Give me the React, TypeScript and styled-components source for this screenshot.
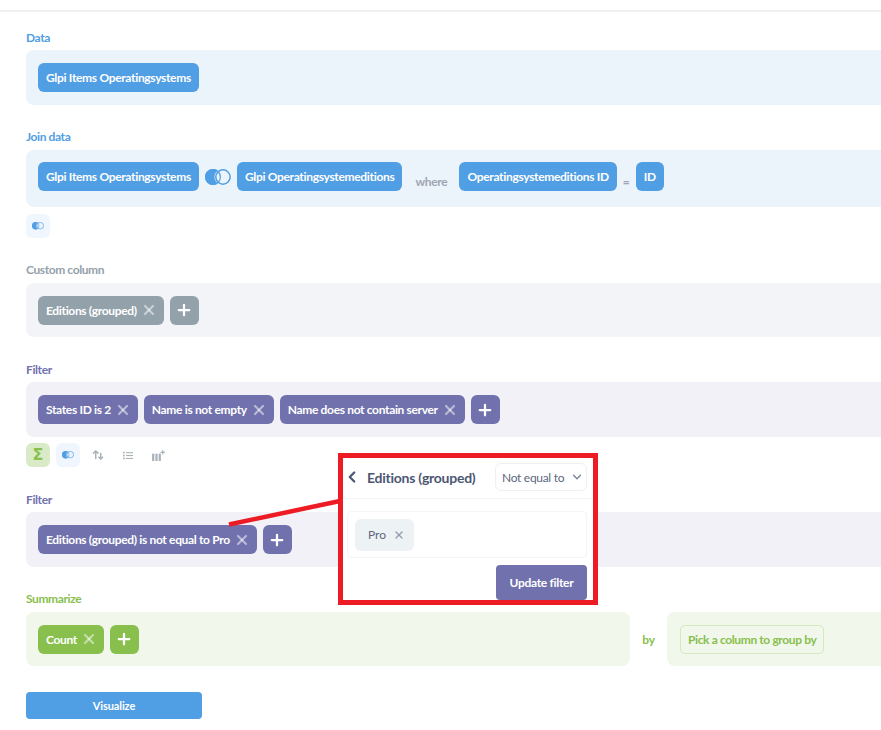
import React from 'react';
import styled, { createGlobalStyle, css } from 'styled-components';
import { ChevronDown, ChevronLeft, Plus, X } from 'lucide-react';

type Tone = 'blue' | 'gray' | 'purple' | 'green';

const tones: Record<Tone, { main: string; soft: string }> = {
  blue: { main: '#509ee3', soft: '#ebf3fb' },
  gray: { main: '#93a1ab', soft: '#f3f4f7' },
  purple: { main: '#7172ad', soft: '#f1f1f7' },
  green: { main: '#88bf4d', soft: '#f1f7ea' },
};

const GlobalStyle = createGlobalStyle`
  html, body {
    margin: 0;
    padding: 0;
    background: #fff;
    overflow: hidden;
    font-family: Lato, "Open Sans", sans-serif;
  }
`;

const Page = styled.div`
  position: relative;
  width: 881px;
  height: 730px;
  overflow: hidden;
  padding-top: 10px;
  box-sizing: border-box;
`;

const TopRule = styled.div`
  height: 2px;
  background: #f0f0f0;
`;

const Content = styled.div`
  width: 1000px;
  padding: 20px 0 0 26px;
  box-sizing: border-box;
`;

const Section = styled.section<{ $gap: number }>`
  margin-bottom: ${p => p.$gap}px;
`;

const Label = styled.div<{ $tone: Tone; $low?: boolean }>`
  height: 13px;
  line-height: ${p => (p.$low ? 12 : 10)}px;
  margin-bottom: 5px;
  font-size: 12px;
  font-weight: 700;
  letter-spacing: -0.4px;
  color: ${p => tones[p.$tone].main};
`;

const Panel = styled.div<{ $tone: Tone; $height: number }>`
  display: flex;
  align-items: center;
  gap: 6px;
  height: ${p => p.$height}px;
  padding: 0 12px;
  box-sizing: border-box;
  border-radius: 8px 0 0 8px;
  background: ${p => tones[p.$tone].soft};
`;

const JoinPanel = styled(Panel)`
  align-items: flex-start;
  padding-top: 12px;
`;

const Chip = styled.div<{ $tone: Tone }>`
  display: inline-flex;
  align-items: center;
  height: 29px;
  padding: 0 8px;
  box-sizing: border-box;
  border-radius: 6px;
  background: ${p => tones[p.$tone].main};
  color: #fff;
  font-size: 12px;
  font-weight: 700;
  letter-spacing: -0.32px;
  white-space: nowrap;
  flex: none;
`;

const ClosableChip = styled(Chip)`
  letter-spacing: -0.34px;
`;

const ChipClose = styled(X)`
  margin-left: 4px;
  margin-right: -1px;
  color: rgba(255, 255, 255, 0.5);
`;

const AddButton = styled.div<{ $tone: Tone }>`
  display: flex;
  align-items: center;
  justify-content: center;
  width: 29px;
  height: 29px;
  border-radius: 6px;
  background: ${p => tones[p.$tone].main};
  color: #fff;
  flex: none;
`;

const JoinVenn = styled.div`
  display: flex;
  align-items: center;
  height: 29px;
`;

const JoinWord = styled.span`
  margin: 12px 6px 0 7px;
  font-size: 12px;
  font-weight: 700;
  letter-spacing: -0.3px;
  color: #a0a5b4;
`;

const EqualSign = styled.span`
  margin-top: 12px;
  font-size: 12px;
  font-weight: 700;
  color: #a0a5b4;
`;

const ToolRow = styled.div<{ $top: number }>`
  display: flex;
  align-items: center;
  gap: 6px;
  height: 24px;
  margin-top: ${p => p.$top}px;
`;

const ToolButton = styled.div<{ $kind?: 'green' | 'blue' }>`
  display: flex;
  align-items: center;
  justify-content: center;
  width: 24px;
  height: 24px;
  border-radius: 6px;
  color: #a9b2b9;
  ${p =>
    p.$kind === 'green' &&
    css`
      background: #d9eac6;
      color: #88bf4d;
    `}
  ${p =>
    p.$kind === 'blue' &&
    css`
      background: #f0f6fd;
      color: #509ee3;
    `}
`;

const SigmaGlyph = styled.span`
  font-family: "DejaVu Sans", sans-serif;
  font-size: 16px;
  font-weight: 700;
  line-height: 1;
`;

const SummarizeRow = styled.div`
  display: flex;
  align-items: stretch;
`;

const SummarizeLeft = styled(Panel)`
  flex: none;
  width: 604px;
  border-radius: 8px;
`;

const ByWord = styled.span`
  display: flex;
  align-items: center;
  justify-content: center;
  width: 37px;
  font-size: 12px;
  font-weight: 700;
  letter-spacing: -0.3px;
  color: #88bf4d;
`;

const GroupPanel = styled(Panel)`
  flex: 1;
  padding-left: 13px;
`;

const GroupPicker = styled.div`
  display: flex;
  align-items: center;
  height: 29px;
  padding: 0 7px;
  box-sizing: border-box;
  border: 1px solid #d5e8bf;
  border-radius: 5px;
  font-size: 12px;
  font-weight: 700;
  letter-spacing: -0.38px;
  color: #88bf4d;
`;

const VisualizeButton = styled.div`
  display: flex;
  align-items: center;
  justify-content: center;
  width: 176px;
  height: 27px;
  border-radius: 4px;
  background: #509ee3;
  color: #fff;
  font-size: 11px;
  font-weight: 700;
  letter-spacing: -0.1px;
`;

const Callout = styled.div`
  position: absolute;
  left: 338px;
  top: 453px;
  width: 260px;
  height: 152px;
  box-sizing: border-box;
  border: 5px solid #ed1c24;
  background: #fff;
  display: flex;
  flex-direction: column;
`;

const CalloutHeader = styled.div`
  display: flex;
  align-items: center;
  justify-content: space-between;
  height: 41px;
  padding: 5px 6px 7px 0;
  box-sizing: border-box;
  border-bottom: 1px solid #f3f4f6;
`;

const CalloutTitle = styled.div`
  display: flex;
  align-items: center;
  gap: 6px;
  font-size: 14px;
  font-weight: 700;
  letter-spacing: -0.25px;
  color: #4c5773;
`;

const OperatorSelect = styled.div`
  display: flex;
  align-items: center;
  gap: 6px;
  width: 92px;
  height: 28px;
  padding-left: 6px;
  box-sizing: border-box;
  border: 1px solid #f0f0f3;
  border-radius: 6px;
  font-size: 12px;
  font-weight: 400;
  letter-spacing: -0.3px;
  white-space: nowrap;
  color: #5d6780;
`;

const SelectChevron = styled(ChevronDown)`
  color: #7a8398;
`;

const ValueBox = styled.div`
  display: flex;
  align-items: center;
  height: 47px;
  margin: 12px 6px 0 4px;
  padding-left: 7px;
  box-sizing: border-box;
  border: 1px solid #f3f4f6;
  border-radius: 4px;
`;

const ValueChip = styled.div`
  display: flex;
  align-items: center;
  gap: 7px;
  width: 59px;
  height: 32px;
  padding-left: 13px;
  box-sizing: border-box;
  border-radius: 6px;
  background: #edf2f5;
  font-size: 12px;
  font-weight: 400;
  color: #5d6780;
`;

const CalloutFooter = styled.div`
  display: flex;
  justify-content: flex-end;
  margin: 7px 6px 0 0;
`;

const UpdateButton = styled.div`
  display: flex;
  align-items: center;
  justify-content: center;
  width: 91px;
  height: 35px;
  border-radius: 4px;
  background: #7172ad;
  color: #fff;
  font-size: 12px;
  font-weight: 700;
  letter-spacing: -0.3px;
`;

const ConnectorLine = styled.svg`
  position: absolute;
  left: 225px;
  top: 495px;
`;

const VennIcon = ({ size = 26 }: { size?: number }) => (
  <svg width={size} height={(size * 16) / 26} viewBox="0 0 26 16" fill="none">
    <circle cx="8" cy="8" r="8" fill="#509ee3" />
    <circle cx="18" cy="8" r="8.6" fill="#fff" fillOpacity="0.8" />
    <circle cx="18" cy="8" r="7.2" fill="#ebf3fb" stroke="#509ee3" strokeWidth="1.5" />
    <circle cx="8" cy="8" r="7.4" stroke="#509ee3" strokeWidth="1.2" />
  </svg>
);

const SortIcon = () => (
  <svg width="12" height="10" viewBox="0 0 13 11" fill="none" stroke="currentColor" strokeWidth="1.6">
    <path d="M4 10V1.5M1 4l3-3 3 3" />
    <path d="M9.5 3v7M7 7.5l2.5 2.5L12 7.5" />
  </svg>
);

const ListIcon = () => (
  <svg width="10" height="9" viewBox="0 0 12 10" fill="currentColor">
    <rect x="0" y="0.5" width="2" height="2" />
    <rect x="0" y="4" width="2" height="2" />
    <rect x="0" y="7.5" width="2" height="2" />
    <rect x="3.5" y="1" width="8.5" height="1.3" />
    <rect x="3.5" y="4.4" width="8.5" height="1.3" />
    <rect x="3.5" y="7.9" width="8.5" height="1.3" />
  </svg>
);

const ColumnsAddIcon = () => (
  <svg width="13" height="11" viewBox="0 0 14 12" fill="currentColor">
    <rect x="0" y="4" width="2.4" height="8" />
    <rect x="3.6" y="4" width="2.4" height="8" />
    <rect x="7.2" y="4" width="2.4" height="8" />
    <path d="M11 0h1.2v2H14v1.2h-1.8V5H11V3.2H9.2V2H11z" />
  </svg>
);

function RemovableChip({ tone, text }: { tone: Tone; text: string }) {
  return (
    <ClosableChip $tone={tone}>
      {text}
      <ChipClose size={16} strokeWidth={3.2} />
    </ClosableChip>
  );
}

function Add({ tone }: { tone: Tone }) {
  return (
    <AddButton $tone={tone}>
      <Plus size={18} strokeWidth={3} />
    </AddButton>
  );
}

export default function App() {
  return (
    <>
      <GlobalStyle />
      <Page>
        <TopRule />
        <Content>
          <Section $gap={27}>
            <Label $tone="blue" $low>Data</Label>
            <Panel $tone="blue" $height={55}>
              <Chip $tone="blue">Glpi Items Operatingsystems</Chip>
            </Panel>
          </Section>

          <Section $gap={27}>
            <Label $tone="blue">Join data</Label>
            <JoinPanel $tone="blue" $height={57}>
              <Chip $tone="blue">Glpi Items Operatingsystems</Chip>
              <JoinVenn>
                <VennIcon />
              </JoinVenn>
              <Chip $tone="blue">Glpi Operatingsystemeditions</Chip>
              <JoinWord>where</JoinWord>
              <Chip $tone="blue">Operatingsystemeditions ID</Chip>
              <EqualSign>=</EqualSign>
              <Chip $tone="blue">ID</Chip>
            </JoinPanel>
            <ToolRow $top={7}>
              <ToolButton $kind="blue">
                <VennIcon size={12} />
              </ToolButton>
            </ToolRow>
          </Section>

          <Section $gap={27}>
            <Label $tone="gray">Custom column</Label>
            <Panel $tone="gray" $height={54}>
              <RemovableChip tone="gray" text="Editions (grouped)" />
              <Add tone="gray" />
            </Panel>
          </Section>

          <Section $gap={27}>
            <Label $tone="purple" $low>Filter</Label>
            <Panel $tone="purple" $height={55}>
              <RemovableChip tone="purple" text="States ID is 2" />
              <RemovableChip tone="purple" text="Name is not empty" />
              <RemovableChip tone="purple" text="Name does not contain server" />
              <Add tone="purple" />
            </Panel>
            <ToolRow $top={6}>
              <ToolButton $kind="green">
                <SigmaGlyph>Σ</SigmaGlyph>
              </ToolButton>
              <ToolButton $kind="blue">
                <VennIcon size={12} />
              </ToolButton>
              <ToolButton>
                <SortIcon />
              </ToolButton>
              <ToolButton>
                <ListIcon />
              </ToolButton>
              <ToolButton>
                <ColumnsAddIcon />
              </ToolButton>
            </ToolRow>
          </Section>

          <Section $gap={27}>
            <Label $tone="purple" $low>Filter</Label>
            <Panel $tone="purple" $height={55}>
              <RemovableChip tone="purple" text="Editions (grouped) is not equal to Pro" />
              <Add tone="purple" />
            </Panel>
          </Section>

          <Section $gap={26}>
            <Label $tone="green">Summarize</Label>
            <SummarizeRow>
              <SummarizeLeft $tone="green" $height={54}>
                <RemovableChip tone="green" text="Count" />
                <Add tone="green" />
              </SummarizeLeft>
              <ByWord>by</ByWord>
              <GroupPanel $tone="green" $height={54}>
                <GroupPicker>Pick a column to group by</GroupPicker>
              </GroupPanel>
            </SummarizeRow>
          </Section>

          <VisualizeButton>Visualize</VisualizeButton>
        </Content>

        <Callout>
          <CalloutHeader>
            <CalloutTitle>
              <ChevronLeft size={18} strokeWidth={3} />
              Editions (grouped)
            </CalloutTitle>
            <OperatorSelect>
              Not equal to
              <SelectChevron size={14} strokeWidth={2.4} />
            </OperatorSelect>
          </CalloutHeader>
          <ValueBox>
            <ValueChip>
              Pro
              <X size={12} strokeWidth={2.6} color="#949aab" />
            </ValueChip>
          </ValueBox>
          <CalloutFooter>
            <UpdateButton>Update filter</UpdateButton>
          </CalloutFooter>
        </Callout>

        <ConnectorLine width="120" height="35" viewBox="0 0 120 35">
          <line x1="4" y1="29.5" x2="115" y2="6" stroke="#ed1c24" strokeWidth="4.5" />
        </ConnectorLine>
      </Page>
    </>
  );
}
